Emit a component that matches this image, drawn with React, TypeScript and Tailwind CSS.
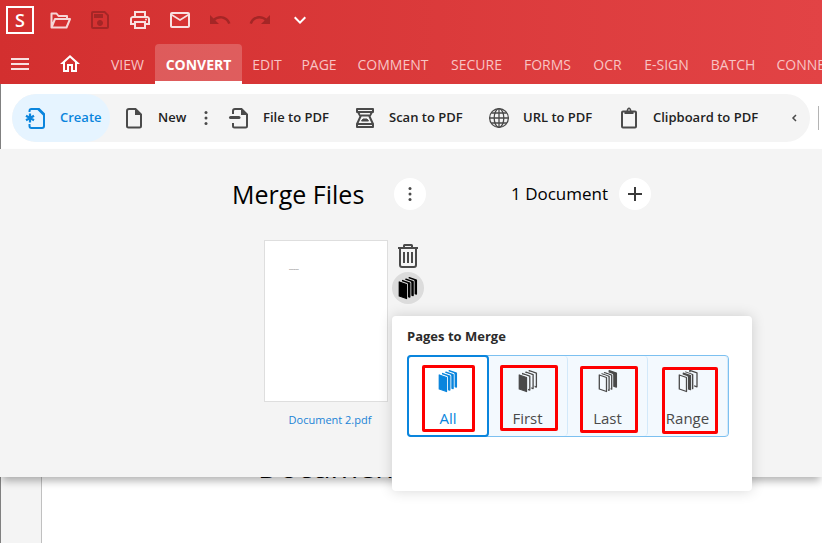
import React, { useState } from 'react';
import {
  MdOutlineSave,
  MdOutlinePrint,
  MdOutlineMail,
  MdUndo,
  MdRedo,
  MdExpandMore,
  MdMenu,
  MdOutlineHome,
} from 'react-icons/md';

const FolderIcon = () => (
  <svg width="24" height="24" viewBox="0 0 24 24" fill="none" stroke="currentColor" strokeWidth="2" strokeLinejoin="round">
    <path d="M3.500 19.500V5.500h5l2 2.500H19v3M3.500 19.500l3.500-8.500h15l-3.500 8.500z" />
  </svg>
);

const CreateIcon = () => (
  <svg width="24" height="24" viewBox="0 0 24 24" fill="none" stroke="currentColor" strokeWidth="2">
    <path d="M5.500 6V5q0-2 2-2H15l5 5v12q0 2-2 2H7.500q-2 0-2-2v-2" />
    <path d="M14.500 3v.500L20 9" />
    <path d="M6 7.500v9M2 9.700l8 4.600M10 9.700l-8 4.600" strokeWidth="2.200" />
  </svg>
);

const NewIcon = () => (
  <svg width="24" height="24" viewBox="0 0 24 24" fill="none" stroke="currentColor" strokeWidth="2">
    <path d="M13.500 3H7q-2 0-2 2v15q0 1.500 1.500 1.500h11q1.500 0 1.500-1.500V8.500z" />
    <path d="M13 2.500V9h6.500z" fill="currentColor" stroke="none" />
  </svg>
);

const FileToPdfIcon = () => (
  <svg width="24" height="24" viewBox="0 0 24 24" fill="none" stroke="currentColor" strokeWidth="2">
    <path d="M6 8V5q0-2 2-2h6.500L20 8.500V20q0 1.500-1.500 1.500h-11Q6 21.500 6 20v-3" />
    <path d="M14 2.500V9h6.500z" fill="currentColor" stroke="none" />
    <path d="M3.500 11.500h8.500" strokeWidth="3" strokeLinecap="round" />
  </svg>
);

const ScanIcon = () => (
  <svg width="24" height="24" viewBox="0 0 24 24" fill="none" stroke="currentColor" strokeWidth="2" strokeLinejoin="round">
    <path d="M4 3h16v3H4zM4 18h16v3H4z" />
    <path d="M5 6l2.500 4.500L4 18M19 6l-2.500 4.500L20 18M8 9.500h8" />
    <path d="M10 13h4l1.500 2h-7z" fill="currentColor" strokeWidth="1" />
  </svg>
);

const GlobeIcon = () => (
  <svg width="24" height="24" viewBox="0 0 24 24" fill="none" stroke="currentColor" strokeWidth="1.300">
    <circle cx="12" cy="12" r="9.400" />
    <ellipse cx="12" cy="12" rx="4.800" ry="9.400" />
    <path d="M12 2.600v18.800M2.600 12h18.800M4.500 7h15M4.500 17h15" />
  </svg>
);

const ClipboardIcon = () => (
  <svg width="24" height="24" viewBox="0 0 24 24" fill="none" stroke="currentColor" strokeWidth="2">
    <rect x="5" y="5.500" width="14" height="16" rx="1" />
    <path d="M7.500 5h2q.500-3.500 2.500-3.500T14.500 5h2v3h-9z" fill="currentColor" stroke="none" />
    <circle cx="12" cy="4" r=".8" fill="#f4f4f4" stroke="none" />
  </svg>
);

const TrashIcon = () => (
  <svg width="24" height="26" viewBox="0 0 24 26" fill="none" stroke="currentColor" strokeWidth="2">
    <path d="M2 5h20M8 5V2.500q0-.500.500-.500h7q.500 0 .500.500V5" />
    <path d="M4 5v17q0 2 2 2h12q2 0 2-2V5" />
    <path d="M8 9v11M12 9v11M16 9v11" />
  </svg>
);

const DotsIcon = () => (
  <svg width="4" height="16" viewBox="0 0 4 16" fill="currentColor">
    <circle cx="2" cy="2.500" r="1.500" />
    <circle cx="2" cy="8" r="1.500" />
    <circle cx="2" cy="13.500" r="1.500" />
  </svg>
);

type Sheet = { at: number; filled: boolean };

// sheets are listed front to back
const allSheets: Sheet[] = [
  { at: 0, filled: true },
  { at: 3.3, filled: true },
  { at: 6.6, filled: true },
  { at: 9.9, filled: true },
];
const firstSheets: Sheet[] = [
  { at: 0, filled: true },
  { at: 3.3, filled: false },
  { at: 6.6, filled: false },
  { at: 9.9, filled: false },
];
const lastSheets: Sheet[] = [
  { at: 0, filled: false },
  { at: 2.6, filled: false },
  { at: 5.2, filled: false },
  { at: 9.9, filled: true },
];
const rangeSheets: Sheet[] = [
  { at: 0, filled: false },
  { at: 4, filled: true },
  { at: 6.2, filled: true },
  { at: 10.5, filled: false },
];

const StackIcon = ({ sheets, background }: { sheets: Sheet[]; background: string }) => (
  <svg width="20" height="24" viewBox="0 0 20 24" strokeLinejoin="round">
    {sheets
      .map(({ at, filled }) => {
        const sheet = `M${1.3 + at} ${6 - at * 0.45}l7.200 2.500v14l-7.200-2.500z`;
        return (
          <g key={at}>
            <path d={sheet} fill={background} stroke={background} strokeWidth="3" />
            <path d={sheet} fill={filled ? 'currentColor' : background} stroke="currentColor" strokeWidth="1.300" />
          </g>
        );
      })
      .reverse()}
  </svg>
);

const quickActions = [
  { label: 'Open', icon: <FolderIcon />, className: 'text-white/80' },
  { label: 'Save', icon: <MdOutlineSave size={24} />, className: 'text-[#a52626]' },
  { label: 'Print', icon: <MdOutlinePrint size={24} />, className: 'text-white/85' },
  { label: 'Mail', icon: <MdOutlineMail size={24} />, className: 'text-white/85' },
  { label: 'Undo', icon: <MdUndo size={24} />, className: 'text-[#a52626]' },
  { label: 'Redo', icon: <MdRedo size={24} />, className: 'text-[#a52626]' },
  { label: 'More', icon: <MdExpandMore size={24} />, className: 'text-white' },
];

const tabs = [
  { label: 'VIEW', width: 'w-[55px]' },
  { label: 'CONVERT', width: 'w-[87px]' },
  { label: 'EDIT', width: 'w-[50px]' },
  { label: 'PAGE', width: 'w-[54px]' },
  { label: 'COMMENT', width: 'w-[94px]' },
  { label: 'SECURE', width: 'w-[73px]' },
  { label: 'FORMS', width: 'w-[69px]' },
  { label: 'OCR', width: 'w-[51px]' },
  { label: 'E-SIGN', width: 'w-[67px]' },
  { label: 'BATCH', width: 'w-[66px]' },
  { label: 'CONNECT', width: 'w-[86px]' },
];

const tools = [
  { label: 'File to PDF', icon: <FileToPdfIcon />, width: 'w-[126px]' },
  { label: 'Scan to PDF', icon: <ScanIcon />, width: 'w-[134px]' },
  { label: 'URL to PDF', icon: <GlobeIcon />, width: 'w-[130px]' },
  { label: 'Clipboard to PDF', icon: <ClipboardIcon />, width: 'w-[164px]' },
];

const mergeOptions = [
  { label: 'All', sheets: allSheets, mark: 'left-[13px] top-2 w-[53px] h-[67px]' },
  { label: 'First', sheets: firstSheets, mark: 'left-3 top-[9px] w-[58px] h-[66px]' },
  { label: 'Last', sheets: lastSheets, mark: 'left-3 top-[10px] w-[58px] h-[67px]' },
  { label: 'Range', sheets: rangeSheets, mark: 'left-[14px] top-[11px] w-[56px] h-[67px]' },
];

const Header = () => {
  const [active, setActive] = useState('CONVERT');

  return (
    <header className="overflow-hidden bg-linear-to-r from-[#d32f2f] to-[#e24345]">
      <div className="flex h-10 items-center">
        <div className="flex w-10 justify-center">
          <div className="flex size-7 items-center justify-center border-2 border-white text-lg font-semibold text-white">
            S
          </div>
        </div>
        {quickActions.map((action) => (
          <button key={action.label} aria-label={action.label} className={`flex w-10 justify-center ${action.className}`}>
            {action.icon}
          </button>
        ))}
      </div>
      <nav className="mt-1 flex h-10 items-center">
        <button aria-label="Menu" className="flex w-10 shrink-0 justify-center text-white/85">
          <MdMenu size={24} />
        </button>
        <button aria-label="Home" className="flex w-[60px] shrink-0 justify-center text-white">
          <MdOutlineHome size={24} />
        </button>
        {tabs.map((tab) => (
          <button
            key={tab.label}
            onClick={() => setActive(tab.label)}
            className={`flex h-10 shrink-0 items-center justify-center border-b-3 pt-1 text-sm ${tab.width} ${
              tab.label === active
                ? 'rounded-t border-white bg-white/20 font-bold text-white'
                : 'border-transparent text-[#f8c4c4]'
            }`}
          >
            {tab.label}
          </button>
        ))}
      </nav>
    </header>
  );
};

const Toolbar = () => (
  <div className="flex items-center border-l border-[#808080] bg-white pt-[10px] pr-[3px] pb-[7px] pl-[11px] text-[13px] font-semibold text-[#222]">
    <div className="flex h-12 min-w-0 flex-1 items-center overflow-hidden rounded-full bg-[#f4f4f4] whitespace-nowrap">
      <button className="flex h-12 w-[98px] shrink-0 items-center gap-3 rounded-full bg-[#e6f4ff] pl-3 text-[#0a85dd]">
        <CreateIcon />
        Create
      </button>
      <button className="flex w-[86px] shrink-0 items-center gap-3 pl-3">
        <span className="text-[#4a4a4a]"><NewIcon /></span>
        New
      </button>
      <button aria-label="New options" className="flex w-5 shrink-0 justify-center text-[#4a4a4a]">
        <DotsIcon />
      </button>
      {tools.map((tool) => (
        <button key={tool.label} className={`flex shrink-0 items-center gap-3 pl-[11px] ${tool.width}`}>
          <span className="text-[#4a4a4a]">{tool.icon}</span>
          {tool.label}
        </button>
      ))}
      <button aria-label="Collapse" className="ml-auto flex w-8 shrink-0 justify-center text-[#4a4a4a]">
        <svg width="8" height="10" viewBox="0 0 8 10" fill="none" stroke="currentColor" strokeWidth="1.500">
          <path d="M6 2L3 5l3 3" />
        </svg>
      </button>
    </div>
    <div className="ml-2 h-6 w-px bg-[#b4b4b4]" />
  </div>
);

const MergePopup = () => {
  const [selected, setSelected] = useState('All');

  return (
    <div className="absolute top-[76px] left-[128px] z-10 h-[175px] w-[360px] rounded bg-white px-[15px] pt-[10px] shadow-[0_0_14px_rgba(0,0,0,0.16)]">
      <h2 className="text-[13px] leading-5 font-bold text-[#2b2b2b]">Pages to Merge</h2>
      <fieldset className="mt-[9px] flex h-[82px] w-[322px] rounded border border-[#7cc0f0] bg-[#f3f9fe]">
        {mergeOptions.map((option) => (
          <label
            key={option.label}
            className={`relative flex flex-col items-center rounded text-[15px] ${
              option.label === selected
                ? '-m-px w-[82px] border-2 border-[#0a85dd] bg-white pt-3 text-[#0a85dd]'
                : 'w-20 border-r border-[#d3e9fa] pt-[13px] text-[#4a4a4a]'
            }`}
          >
            <input
              type="radio"
              name="pages"
              className="sr-only"
              checked={option.label === selected}
              onChange={() => setSelected(option.label)}
            />
            <StackIcon sheets={option.sheets} background={option.label === selected ? '#ffffff' : '#f3f9fe'} />
            <span className="mt-[15px] leading-5">{option.label}</span>
            <span className={`absolute rounded-xs border-3 border-[#fe0000] ${option.mark}`} />
          </label>
        ))}
      </fieldset>
    </div>
  );
};

const MergePanel = () => (
  <main className="relative h-[328px] bg-[#f4f4f4] pt-7 shadow-[0_6px_8px_-2px_rgba(0,0,0,0.3)]">
    <div className="flex items-center pl-[232px]">
      <h1 className="w-[162px] text-[25px] leading-8 whitespace-nowrap text-black">Merge Files</h1>
      <button aria-label="Merge options" className="flex size-8 items-center justify-center rounded-full bg-white text-[#4a4a4a]">
        <DotsIcon />
      </button>
      <span className="ml-[85px] w-[108px] text-[17px] leading-[34px] whitespace-nowrap text-black">1 Document</span>
      <button aria-label="Add document" className="flex size-8 items-center justify-center rounded-full bg-white text-[#3a3a3a]">
        <svg width="14" height="14" viewBox="0 0 14 14" stroke="currentColor" strokeWidth="2">
          <path d="M7 0v14M0 7h14" />
        </svg>
      </button>
    </div>
    <div className="relative mt-[29px] ml-[264px] flex">
      <figure>
        <div className="h-[162px] w-[124px] border border-[#dedede] bg-white">
          <p className="pt-[27px] pl-6 text-[2px] leading-[3px] text-[#555]">Document</p>
        </div>
        <figcaption className="mt-2 w-[132px] text-center text-[11px] leading-5 text-[#1a83d6]">Document 2.pdf</figcaption>
      </figure>
      <div className="-ml-1 flex w-8 flex-col items-center">
        <button aria-label="Delete" className="flex h-8 items-center text-[#4a4a4a]">
          <TrashIcon />
        </button>
        <button aria-label="Pages to merge" className="flex size-8 items-center justify-center rounded-full bg-[#dcdcdc] text-black">
          <StackIcon sheets={allSheets} background="#dcdcdc" />
        </button>
      </div>
      <MergePopup />
    </div>
  </main>
);

const App: React.FC = () => (
  <div className="flex h-screen flex-col overflow-hidden bg-white font-['Open_Sans','Noto_Sans',sans-serif]">
    <Header />
    <Toolbar />
    <MergePanel />
    <div className="-mt-[30px] flex flex-1 border-l border-[#808080]">
      <aside className="w-[41px] border-r border-[#c0c0c0] bg-[#f4f4f4]" />
      <p className="pl-[216px] text-[30px] leading-10 text-black">Document</p>
    </div>
  </div>
);

export default App;
